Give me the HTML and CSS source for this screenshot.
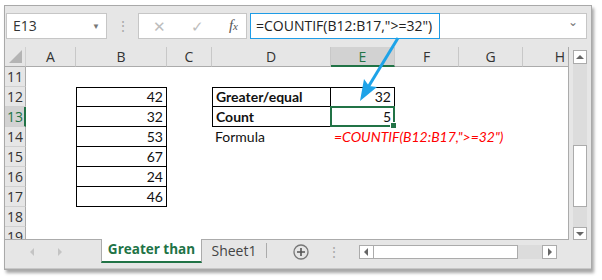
FILE: index.html
```html
<!DOCTYPE html>
<html>
<head>
    <link rel="stylesheet" href="styles.css">
</head>
<body>
    <div class="window">
        <div class="formula-bar">
            <div class="name-box">E13<span class="caret">&#9660;</span></div>
            <div class="grip">&#8942;</div>
            <div class="fx-box">
                <span class="fx-btn">&#10005;</span>
                <span class="fx-btn">&#10003;</span>
                <span class="fx-btn fx"><i>f</i><i class="x">x</i></span>
            </div>
            <div class="formula-input">
                <div class="formula-text">=COUNTIF(B12:B17,"&gt;=32")</div>
                <span class="chev">&#8964;</span>
            </div>
        </div>

        <div class="sheet-area">
            <div class="sheet">
                <div class="corner"><span class="tri"></span></div>
                <div class="col-head">A</div>
                <div class="col-head">B</div>
                <div class="col-head">C</div>
                <div class="col-head">D</div>
                <div class="col-head active">E</div>
                <div class="col-head">F</div>
                <div class="col-head">G</div>
                <div class="col-head right">H</div>

                <div class="row-head">11</div>
                <div></div><div></div><div></div><div></div><div></div><div></div><div></div><div></div>

                <div class="row-head">12</div>
                <div></div>
                <div class="cell num box top">42</div>
                <div></div>
                <div class="cell bold box top">Greater/equal</div>
                <div class="cell num box top no-left">32</div>
                <div></div><div></div><div></div>

                <div class="row-head active">13</div>
                <div></div>
                <div class="cell num box">32</div>
                <div></div>
                <div class="cell bold box">Count</div>
                <div class="cell num box no-left selected">5</div>
                <div></div><div></div><div></div>

                <div class="row-head">14</div>
                <div></div>
                <div class="cell num box">53</div>
                <div></div>
                <div class="cell">Formula</div>
                <div class="cell red">=COUNTIF(B12:B17,"&gt;=32")</div>
                <div></div><div></div><div></div>

                <div class="row-head">15</div>
                <div></div>
                <div class="cell num box">67</div>
                <div></div><div></div><div></div><div></div><div></div><div></div>

                <div class="row-head">16</div>
                <div></div>
                <div class="cell num box">24</div>
                <div></div><div></div><div></div><div></div><div></div><div></div>

                <div class="row-head">17</div>
                <div></div>
                <div class="cell num box">46</div>
                <div></div><div></div><div></div><div></div><div></div><div></div>

                <div class="row-head">18</div>
                <div></div><div></div><div></div><div></div><div></div><div></div><div></div><div></div>

                <div class="row-head">19</div>
                <div></div><div></div><div></div><div></div><div></div><div></div><div></div><div></div>
            </div>

            <div class="vscroll">
                <div class="sbtn up"><span class="tri-up"></span></div>
                <div class="track">
                    <div class="thumb"></div>
                </div>
                <div class="sbtn down"><span class="tri-down"></span></div>
            </div>
        </div>

        <div class="tab-bar">
            <div class="nav">
                <span class="tri-left"></span>
                <span class="tri-right"></span>
            </div>
            <div class="tab active">Greater than</div>
            <div class="tab">Sheet1</div>
            <div class="add">
                <svg width="16" height="16" viewBox="0 0 16 16">
                    <circle cx="8" cy="8" r="7" fill="none" stroke="#777" stroke-width="1.3"/>
                    <path d="M8 4v8M4 8h8" stroke="#555" stroke-width="1.6"/>
                </svg>
            </div>
            <div class="grip tab-grip">&#8942;</div>
            <div class="hscroll">
                <div class="sbtn"><span class="tri-left dark"></span></div>
                <div class="hthumb"></div>
                <div class="htrack"></div>
                <div class="sbtn"><span class="tri-right dark"></span></div>
            </div>
        </div>
        <div class="status-strip"></div>
    </div>

    <svg class="arrow" width="602" height="280" viewBox="0 0 602 280">
        <line x1="398" y1="38" x2="367" y2="89" stroke="#1ea3e8" stroke-width="3"/>
        <path d="M360 101 L364 79 L369 86 L377 87 Z" fill="#1ea3e8"/>
    </svg>
</body>
</html>
```

FILE: styles.css
```css
body {
    margin: 0;
    background-color: white;
    font-family: "Open Sans", "Noto Sans", sans-serif;
    color: #222;
    width: 602px;
    height: 280px;
    overflow: hidden;
}
.window {
    margin: 5px 0 0 4px;
    width: 588px;
    height: 265px;
    box-sizing: border-box;
    border: 1px solid #a9a9a9;
    background-color: #e6e6e6;
    box-shadow: 2px 3px 3px rgba(0,0,0,0.35);
    display: flex;
    flex-direction: column;
}

/* formula bar */
.formula-bar {
    display: flex;
    align-items: center;
    height: 42px;
    padding: 0 0 2px 1px;
    box-sizing: border-box;
}
.name-box, .fx-box, .formula-input {
    height: 26px;
    box-sizing: border-box;
    background-color: white;
    border: 1px solid #c6c6c6;
}
.name-box {
    width: 101px;
    display: flex;
    align-items: center;
    justify-content: space-between;
    padding: 0 6px 0 6px;
    font-size: 14px;
    color: #333;
}
.caret {
    font-size: 8px;
    color: #777;
}
.grip {
    width: 31px;
    text-align: center;
    color: #aaa;
    font-size: 14px;
}
.fx-box {
    width: 109px;
    display: flex;
    align-items: center;
    justify-content: space-between;
    padding: 0 8px 0 14px;
    color: #bdbdbd;
    font-size: 15px;
}
.fx {
    color: #555;
    font-family: "Liberation Serif", serif;
    font-size: 15px;
}
.fx .x {
    font-size: 11px;
}
.formula-input {
    margin-left: 3px;
    width: 337px;
    display: flex;
    align-items: center;
    justify-content: space-between;
}
.formula-text {
    margin: -1px 0 -1px -1px;
    height: 26px;
    width: 190px;
    box-sizing: border-box;
    border: 1px solid #1e9ce6;
    padding: 0 0 0 5px;
    font-size: 14px;
    line-height: 24px;
    color: #222;
    white-space: nowrap;
}
.chev {
    color: #777;
    font-size: 12px;
    margin: 0 8px 8px 0;
}

/* sheet */
.sheet-area {
    display: flex;
    height: 193px;
}
.sheet {
    display: grid;
    grid-template-columns: 21px 50px 91px 45px 119px 64px 64px 64px 47px;
    grid-auto-rows: 20px;
    width: 565px;
    height: 193px;
    overflow: hidden;
    background-color: white;
    border-bottom: 1px solid #ababab;
    border-right: 1px solid #ababab;
    box-sizing: border-box;
}
.corner {
    background-color: #e6e6e6;
    border-right: 1px solid #d0d0d0;
    border-bottom: 1px solid #ababab;
    position: relative;
}
.tri {
    position: absolute;
    right: 3px;
    bottom: 3px;
    border-left: 13px solid transparent;
    border-bottom: 13px solid #b4b4b4;
}
.col-head {
    background-color: #e6e6e6;
    border-right: 1px solid #c8c8c8;
    border-bottom: 1px solid #ababab;
    text-align: center;
    font-size: 14px;
    line-height: 20px;
    color: #333;
}
.col-head.right {
    border-right: none;
    text-align: right;
    padding-right: 5px;
}
.col-head.active {
    background-color: #d2d2d2;
    border-bottom: 2px solid #217346;
    color: #217346;
    line-height: 20px;
}
.row-head {
    background-color: #e6e6e6;
    border-right: 1px solid #ababab;
    border-bottom: 1px solid #d0d0d0;
    font-size: 14px;
    line-height: 20px;
    padding-left: 2px;
    color: #333;
}
.row-head.active {
    background-color: #d2d2d2;
    border-right: 2px solid #217346;
    color: #217346;
}
.cell {
    font-family: Lato, "Noto Sans", sans-serif;
    font-size: 14px;
    line-height: 19px;
    padding: 0 3px;
    white-space: nowrap;
    color: #111;
    box-sizing: border-box;
}
.num {
    text-align: right;
}
.bold {
    font-weight: bold;
}
.box {
    border-left: 1px solid black;
    border-right: 1px solid black;
    border-bottom: 1px solid black;
}
.box.top {
    border-top: 1px solid black;
    line-height: 18px;
}
.box.no-left {
    border-left: none;
}
.selected {
    position: relative;
}
.selected::after {
    content: "";
    position: absolute;
    left: -1px;
    top: -1px;
    right: -1px;
    bottom: -1px;
    border: 2px solid #217346;
}
.selected::before {
    content: "";
    position: absolute;
    right: -3px;
    bottom: -3px;
    width: 5px;
    height: 5px;
    background-color: #217346;
    border: 1px solid white;
    z-index: 1;
}
.red {
    color: #ff0000;
    font-style: italic;
    overflow: visible;
}

/* vertical scrollbar */
.vscroll {
    width: 14px;
    margin: 3px 4px 0 4px;
    display: flex;
    flex-direction: column;
}
.sbtn {
    width: 14px;
    height: 14px;
    box-sizing: border-box;
    background-color: white;
    border: 1px solid #ababab;
    display: flex;
    align-items: center;
    justify-content: center;
}
.track {
    flex: 1;
    background-color: #dcdcdc;
    padding-top: 81px;
}
.thumb {
    height: 62px;
    box-sizing: border-box;
    background-color: white;
    border: 1px solid #ababab;
}
.vscroll .down {
    height: 13px;
}
.tri-up {
    border-left: 4px solid transparent;
    border-right: 4px solid transparent;
    border-bottom: 4px solid #666;
}
.tri-down {
    border-left: 4px solid transparent;
    border-right: 4px solid transparent;
    border-top: 4px solid #666;
}
.tri-left {
    border-top: 4px solid transparent;
    border-bottom: 4px solid transparent;
    border-right: 4px solid #c4c4c4;
}
.tri-right {
    border-top: 4px solid transparent;
    border-bottom: 4px solid transparent;
    border-left: 4px solid #c4c4c4;
}
.tri-left.dark {
    border-right-color: #666;
}
.tri-right.dark {
    border-left-color: #666;
}

/* sheet tabs */
.tab-bar {
    display: flex;
    align-items: stretch;
    height: 23px;
}
.nav {
    width: 96px;
    display: flex;
    align-items: center;
    gap: 24px;
    padding-left: 25px;
    box-sizing: border-box;
}
.tab {
    font-size: 14px;
    line-height: 21px;
    text-align: center;
    color: #444;
}
.tab.active {
    width: 101px;
    background-color: white;
    border-left: 1px solid #ababab;
    border-right: 1px solid #ababab;
    border-bottom: 2px solid #217346;
    box-sizing: border-box;
    color: #217346;
    font-weight: bold;
    font-size: 13.5px;
    margin-top: -1px;
}
.tab:not(.active) {
    width: 64px;
    border-right: 1px solid #ababab;
    margin: 3px 0 5px 0;
    line-height: 15px;
}
.add {
    width: 42px;
    display: flex;
    align-items: center;
    justify-content: flex-end;
}
.tab-grip {
    width: 50px;
    display: flex;
    align-items: center;
    justify-content: center;
}
.hscroll {
    display: flex;
    align-items: center;
    width: 198px;
}
.hthumb {
    width: 146px;
    height: 14px;
    box-sizing: border-box;
    background-color: white;
    border: 1px solid #ababab;
    border-left: none;
}
.htrack {
    width: 24px;
    height: 14px;
    background-color: #dcdcdc;
}
.hscroll .sbtn {
    width: 15px;
}
.status-strip {
    flex: 1;
    border-top: 1px solid #c8c8c8;
    margin-top: 5px;
}

/* callout arrow, drawn over the sheet */
.arrow {
    position: absolute;
    left: 0;
    top: 0;
    pointer-events: none;
}
```
